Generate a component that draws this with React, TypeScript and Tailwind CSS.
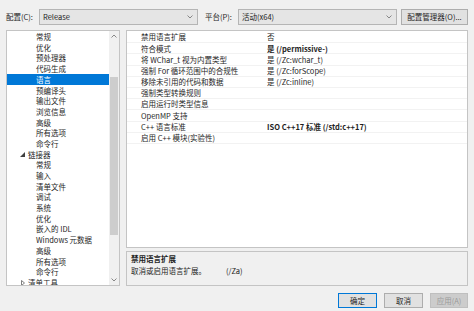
import React from "react";

const Chevron = ({ up = false, className = "" }: { up?: boolean; className?: string }) => (
  <svg width="6" height="4" viewBox="0 0 6 4" className={className}>
    <polyline
      points={up ? "0.5,3.5 3,1 5.5,3.5" : "0.5,0.5 3,3 5.5,0.5"}
      fill="none"
      stroke="#7a7a7a"
      strokeWidth="0.9"
    />
  </svg>
);

type TreeItem = { label: string; level: 0 | 1; expander?: "open" | "closed"; selected?: boolean };

const tree: TreeItem[] = [
  { label: "常规", level: 1 },
  { label: "优化", level: 1 },
  { label: "预处理器", level: 1 },
  { label: "代码生成", level: 1 },
  { label: "语言", level: 1, selected: true },
  { label: "预编译头", level: 1 },
  { label: "输出文件", level: 1 },
  { label: "浏览信息", level: 1 },
  { label: "高级", level: 1 },
  { label: "所有选项", level: 1 },
  { label: "命令行", level: 1 },
  { label: "链接器", level: 0, expander: "open" },
  { label: "常规", level: 1 },
  { label: "输入", level: 1 },
  { label: "清单文件", level: 1 },
  { label: "调试", level: 1 },
  { label: "系统", level: 1 },
  { label: "优化", level: 1 },
  { label: "嵌入的 IDL", level: 1 },
  { label: "Windows 元数据", level: 1 },
  { label: "高级", level: 1 },
  { label: "所有选项", level: 1 },
  { label: "命令行", level: 1 },
  { label: "清单工具", level: 0, expander: "closed" },
];

const props: { name: string; value: string; bold?: boolean }[] = [
  { name: "禁用语言扩展", value: "否" },
  { name: "符合模式", value: "是 (/permissive-)", bold: true },
  { name: "将 WChar_t 视为内置类型", value: "是 (/Zc:wchar_t)" },
  { name: "强制 For 循环范围中的合规性", value: "是 (/Zc:forScope)" },
  { name: "移除未引用的代码和数据", value: "是 (/Zc:inline)" },
  { name: "强制类型转换规则", value: "" },
  { name: "启用运行时类型信息", value: "" },
  { name: "OpenMP 支持", value: "" },
  { name: "C++ 语言标准", value: "ISO C++17 标准 (/std:c++17)", bold: true },
  { name: "启用 C++ 模块(实验性)", value: "" },
];

export default function App() {
  return (
    <div
      className="w-[474px] h-[311px] bg-[#f0f0f0] text-[#1e1e1e] overflow-hidden flex flex-col text-[7.5px] leading-none"
      style={{ fontFamily: '"Noto Sans CJK SC", "Noto Sans", sans-serif' }}
    >
      {/* top bar */}
      <div className="flex items-center h-[16px] mt-[9px] pl-[6px] pr-[6px]">
        <span className="w-[33px]">配置(C):</span>
        <div className="w-[159px] h-[16px] bg-[#e5e5e5] border border-[#b5b5b5] flex items-center pl-[3px] pr-[4px]">
          <span className="flex-1">Release</span>
          <Chevron />
        </div>
        <span className="ml-[7px] w-[33px]">平台(P):</span>
        <div className="w-[159px] h-[16px] bg-[#e5e5e5] border border-[#b5b5b5] flex items-center pl-[3px] pr-[4px]">
          <span className="flex-1">活动(x64)</span>
          <Chevron />
        </div>
        <div className="ml-auto w-[67px] h-[16px] bg-[#e1e1e1] border border-[#adadad] flex items-center justify-center">
          配置管理器(O)...
        </div>
      </div>

      {/* main */}
      <div className="flex mt-[5px] h-[257px] px-[6px] gap-[6px]">
        {/* tree */}
        <div className="w-[114px] h-[256px] bg-white border border-[#c4c4c4] flex overflow-hidden">
          <div className="flex-1 flex flex-col pt-[0.5px] overflow-hidden">
            {tree.map((t, i) => (
              <div
                key={i}
                className={`h-[10.7px] shrink-0 flex items-center ${
                  t.selected ? "bg-[#0078d7] text-white" : ""
                }`}
              >
                {t.level === 0 ? (
                  <>
                    <span className="w-[20px] flex justify-end pr-[2px]">
                      {t.expander === "open" ? (
                        <svg width="5" height="5" viewBox="0 0 5 5">
                          <polygon points="5,0 5,5 0,5" fill="#404040" />
                        </svg>
                      ) : (
                        <svg width="4" height="6" viewBox="0 0 4 6">
                          <polygon points="0.5,0.5 3.5,3 0.5,5.5" fill="none" stroke="#606060" strokeWidth="0.8" />
                        </svg>
                      )}
                    </span>
                    <span className="ml-[1px]">{t.label}</span>
                  </>
                ) : (
                  <span className="ml-[29px]">{t.label}</span>
                )}
              </div>
            ))}
          </div>
          {/* scrollbar */}
          <div className="w-[10px] bg-[#f0f0f0] flex flex-col items-center">
            <div className="h-[10px] flex items-center justify-center">
              <Chevron up />
            </div>
            <div className="w-full flex-1 flex flex-col">
              <div className="h-[36px]" />
              <div className="h-[158px] w-[8px] mx-auto bg-[#cdcdcd]" />
            </div>
            <div className="h-[10px] flex items-center justify-center">
              <Chevron />
            </div>
          </div>
        </div>

        {/* right */}
        <div className="flex-1 flex flex-col">
          <div className="h-[218px] bg-white border border-[#c4c4c4] pt-[1px]">
            {props.map((p, i) => (
              <div key={i} className="h-[11.2px] flex items-center border-b border-[#f2f2f2]">
                <span className="w-[136px] pl-[14px]">{p.name}</span>
                <span className={`pl-[4px] ${p.bold ? "font-bold" : ""}`}>{p.value}</span>
              </div>
            ))}
          </div>
          <div className="mt-[3px] h-[35px] border border-[#c4c4c4] bg-[#f0f0f0] px-[4px] pt-[3px] flex flex-col gap-[4px]">
            <span className="font-bold">禁用语言扩展</span>
            <span>
              取消或启用语言扩展。<span className="ml-[20px]">(/Za)</span>
            </span>
          </div>
        </div>
      </div>

      {/* bottom buttons */}
      <div className="flex justify-end gap-[7px] pr-[6px] mt-[6px]">
        <div className="w-[39px] h-[15px] border border-[#0078d7] bg-[#e1e1e1] flex items-center justify-center">
          确定
        </div>
        <div className="w-[39px] h-[15px] border border-[#adadad] bg-[#e1e1e1] flex items-center justify-center">
          取消
        </div>
        <div className="w-[38px] h-[15px] border border-[#bfbfbf] bg-[#cccccc] text-[#9a9a9a] flex items-center justify-center">
          应用(A)
        </div>
      </div>
    </div>
  );
}
